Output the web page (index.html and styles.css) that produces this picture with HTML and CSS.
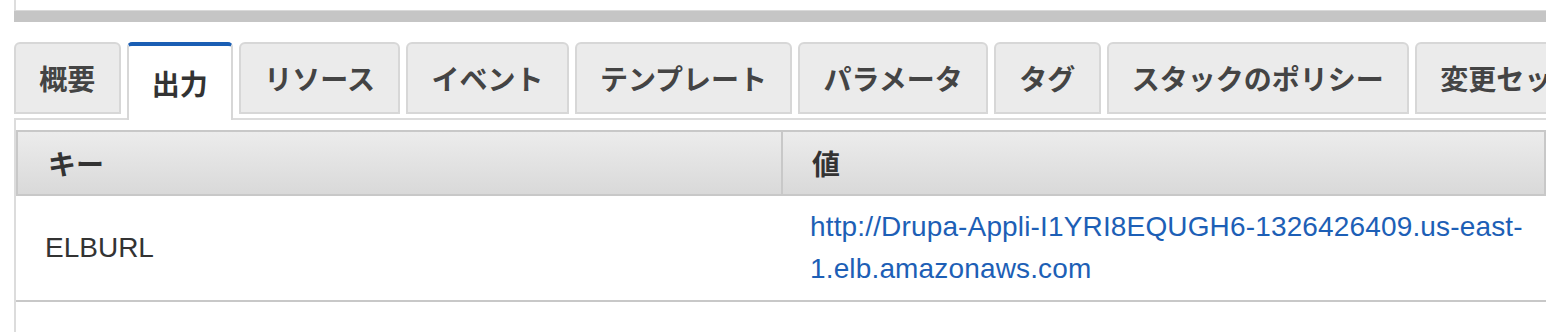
FILE: index.html
```html
<!DOCTYPE html>
<html>
<head>
    <meta charset="utf-8">
    <link rel="stylesheet" href="styles.css">
</head>
<body>
    <div class="summary-box"></div>
    <div class="summary-bar"></div>

    <div class="tab-buttons">
        <div class="tab-btn">概要</div>
        <div class="tab-btn active">出力</div>
        <div class="tab-btn">リソース</div>
        <div class="tab-btn">イベント</div>
        <div class="tab-btn">テンプレート</div>
        <div class="tab-btn">パラメータ</div>
        <div class="tab-btn">タグ</div>
        <div class="tab-btn">スタックのポリシー</div>
        <div class="tab-btn">変更セット</div>
    </div>

    <div class="tab-panel">
        <table class="outputs">
            <thead>
                <tr>
                    <th class="col-key">キー</th>
                    <th>値</th>
                </tr>
            </thead>
            <tbody>
                <tr>
                    <td>ELBURL</td>
                    <td><a href="#">http://Drupa-Appli-I1YRI8EQUGH6-1326426409.us-east-<wbr>1.elb.amazonaws.com</a></td>
                </tr>
            </tbody>
        </table>
    </div>
</body>
</html>
```

FILE: styles.css
```css
body {
    margin: 0;
    background: #fff;
    font-family: "Liberation Sans", "Noto Sans CJK JP", sans-serif;
    color: #333;
    overflow: hidden;
}

.summary-box {
    height: 10px;
    margin-left: 14px;
    border-left: 2px solid #dddddd;
}

.summary-bar {
    height: 11px;
    margin-left: 14px;
    background-color: #c5c5c5;
    border-top: 1px solid #d9d9d9;
}

.tab-buttons {
    display: flex;
    gap: 6px;
    height: 78px;
    margin-top: 20px;
    padding-left: 14px;
    overflow: hidden;
}

.tab-btn {
    flex-shrink: 0;
    display: flex;
    align-items: center;
    box-sizing: border-box;
    height: 72px;
    padding: 0 23.25px;
    border: 2px solid #d7d7d7;
    border-radius: 6px 6px 0 0;
    background-color: #ebebeb;
    font-family: "Noto Sans CJK JP", sans-serif;
    font-size: 28px;
    font-weight: bold;
    color: #444;
    white-space: nowrap;
}

.tab-btn.active {
    position: relative;
    z-index: 1;
    height: 78px;
    border-top: 4px solid #1a5eb4;
    border-bottom: none;
    border-radius: 5px 5px 0 0;
    background-color: #fff;
    color: #333;
}

.tab-panel {
    box-sizing: border-box;
    height: 214px;
    margin-top: -2px;
    margin-left: 14px;
    padding-top: 10px;
    border-top: 2px solid #dcdcdc;
    border-left: 2px solid #dcdcdc;
}

.outputs {
    width: 100%;
    border-collapse: separate;
    border-spacing: 0;
    font-size: 28px;
}

.outputs th {
    height: 62px;
    padding: 0 10px 0 29px;
    text-align: left;
    font-family: "Noto Sans CJK JP", sans-serif;
    font-weight: bold;
    color: #333;
    background: linear-gradient(#ececec, #d9d9d9);
    border-top: 2px solid #c8c8c8;
    border-bottom: 2px solid #c8c8c8;
    border-left: 2px solid #c8c8c8;
}

.outputs th:last-child {
    border-right: 2px solid #c8c8c8;
}

.outputs th.col-key {
    width: 50%;
    padding-left: 30px;
}

.outputs td {
    padding: 10px 10px 10px 29px;
    line-height: 42px;
    vertical-align: middle;
    border-bottom: 2px solid #c8c8c8;
    color: #333;
}

.outputs a {
    color: #1d5fb6;
    text-decoration: none;
    letter-spacing: 0.15px;
}
```
